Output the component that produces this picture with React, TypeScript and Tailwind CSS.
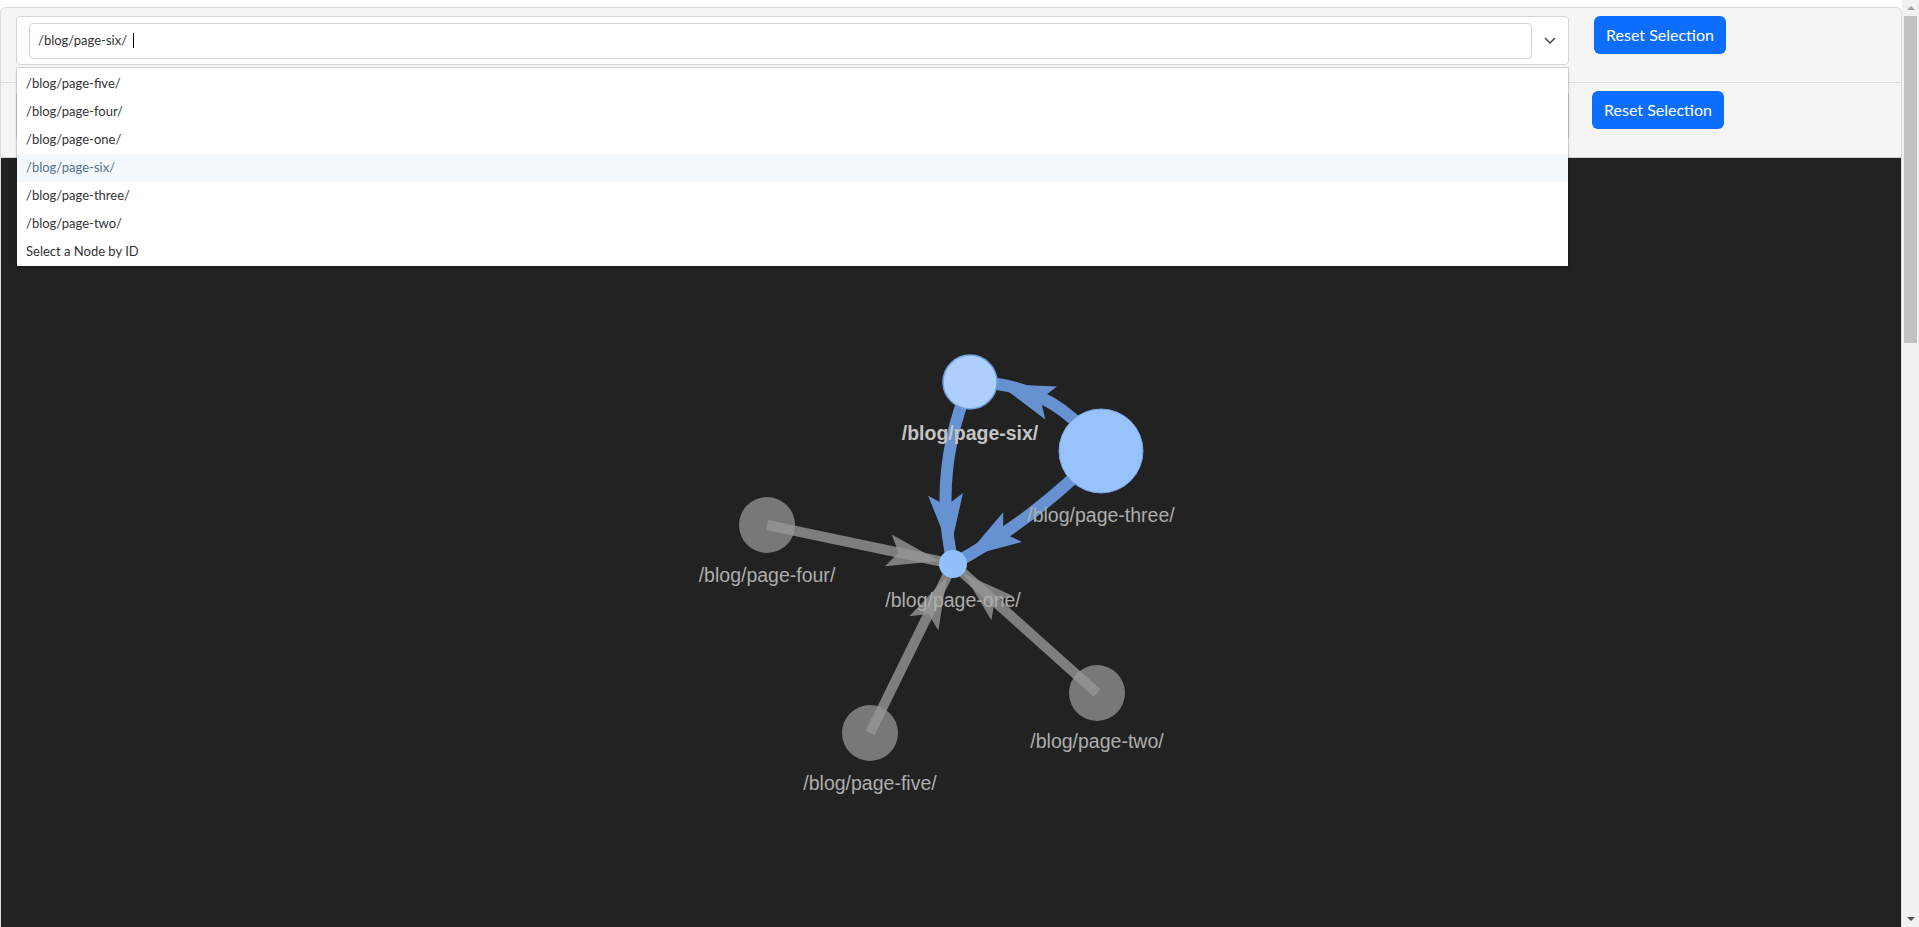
import React from "react";

type P = [number, number];

const OPTIONS = [
  "/blog/page-five/",
  "/blog/page-four/",
  "/blog/page-one/",
  "/blog/page-six/",
  "/blog/page-three/",
  "/blog/page-two/",
  "Select a Node by ID",
];

// node positions are in page coordinates; the svg viewBox is offset to match
const nodes: Record<string, { x: number; y: number; r: number; fill: string; stroke?: string; sw?: number }> = {
  four: { x: 767, y: 525, r: 28, fill: "#787878" },
  five: { x: 870, y: 733, r: 28, fill: "#787878" },
  two: { x: 1097, y: 693, r: 28, fill: "#787878" },
  one: { x: 953, y: 564, r: 14, fill: "#93c0fb" },
  three: { x: 1101, y: 451, r: 42, fill: "#98c2fc", stroke: "#78a6e6", sw: 1 },
  six: { x: 970, y: 382, r: 27, fill: "#aecffd", stroke: "#6f9fe3", sw: 1.5 },
};

const labels = [
  { id: "six", x: 970, y: 440, bold: true },
  { id: "three", x: 1101, y: 522 },
  { id: "one", x: 953, y: 607 },
  { id: "four", x: 767, y: 582 },
  { id: "five", x: 870, y: 790 },
  { id: "two", x: 1097, y: 748 },
];

const qp = (a: P, c: P, b: P, t: number): P => {
  const u = 1 - t;
  return [u * u * a[0] + 2 * u * t * c[0] + t * t * b[0], u * u * a[1] + 2 * u * t * c[1] + t * t * b[1]];
};
const dist = (a: P, b: P) => Math.hypot(a[0] - b[0], a[1] - b[1]);

function arrowHead(a: P, c: P, b: P, r: number, len: number) {
  let t = 1;
  let tip = b;
  while (t > 0 && dist(tip, b) < r) {
    t -= 0.001;
    tip = qp(a, c, b, t);
  }
  let tail = tip;
  while (t > 0 && dist(tail, tip) < len) {
    t -= 0.001;
    tail = qp(a, c, b, t);
  }
  const l = dist(tail, tip);
  const d: P = [(tip[0] - tail[0]) / l, (tip[1] - tail[1]) / l];
  const hw = len / 3.2;
  const base: P = [tip[0] - d[0] * len, tip[1] - d[1] * len];
  const v: P = [base[0] + d[0] * len * 0.2, base[1] + d[1] * len * 0.2];
  const c1: P = [base[0] - d[1] * hw, base[1] + d[0] * hw];
  const c2: P = [base[0] + d[1] * hw, base[1] - d[0] * hw];
  return [tip, c1, v, c2].map((p) => p.map((n) => n.toFixed(1)).join(",")).join(" ");
}

type Link = { s: string; t: string; c?: P; blue?: boolean };

const links: Link[] = [
  { s: "four", t: "one" },
  { s: "five", t: "one" },
  { s: "two", t: "one" },
  { s: "six", t: "one", c: [932, 473], blue: true },
  { s: "three", t: "six", c: [1054, 382], blue: true },
  { s: "three", t: "one", c: [1036, 519], blue: true },
];

function Graph() {
  const grayLinks = links.filter((l) => !l.blue);
  const blueLinks = links.filter((l) => l.blue);

  const geo = (l: Link) => {
    const a: P = [nodes[l.s].x, nodes[l.s].y];
    const b: P = [nodes[l.t].x, nodes[l.t].y];
    const c: P = l.c ?? [(a[0] + b[0]) / 2, (a[1] + b[1]) / 2];
    const tn = nodes[l.t];
    return { a, b, c, r: tn.r + (tn.sw ?? 0) };
  };

  return (
    <svg width="1900" height="769" viewBox="1 158 1900 769" className="block">
      {Object.entries(nodes)
        .filter(([, n]) => n.fill === "#787878")
        .map(([id, n]) => (
          <circle key={id} cx={n.x} cy={n.y} r={n.r} fill={n.fill} />
        ))}

      {grayLinks.map((l, i) => {
        const g = geo(l);
        return (
          <g key={"g" + i} fill="rgba(150,150,150,0.8)">
            <line x1={g.a[0]} y1={g.a[1]} x2={g.b[0]} y2={g.b[1]} stroke="rgba(150,150,150,0.8)" strokeWidth={10} />
            <polygon points={arrowHead(g.a, g.c, g.b, g.r, 52)} />
          </g>
        );
      })}

      {blueLinks.map((l, i) => {
        const g = geo(l);
        return (
          <g key={"b" + i}>
            <path
              d={`M${g.a[0]} ${g.a[1]} Q${g.c[0]} ${g.c[1]} ${g.b[0]} ${g.b[1]}`}
              fill="none"
              stroke="#6692d1"
              strokeWidth={12}
            />
            <polygon points={arrowHead(g.a, g.c, g.b, g.r, 56)} fill="#6692d1" />
          </g>
        );
      })}

      {Object.entries(nodes)
        .filter(([, n]) => n.fill !== "#787878")
        .map(([id, n]) => (
          <circle key={id} cx={n.x} cy={n.y} r={n.r} fill={n.fill} stroke={n.stroke} strokeWidth={n.sw} />
        ))}

      {labels.map((lb) => (
        <text
          key={lb.id}
          x={lb.x}
          y={lb.y}
          textAnchor="middle"
          fontFamily="'Liberation Sans', Arial, sans-serif"
          fontSize={19.5}
          fontWeight={lb.bold ? 700 : 400}
          fill={lb.bold ? "#c4c4c4" : "#adadad"}
        >
          /blog/page-{lb.id}/
        </text>
      ))}
    </svg>
  );
}

function Chevron() {
  return (
    <svg width="12" height="7" viewBox="0 0 12 7">
      <path d="M1 1 L6 6 L11 1" fill="none" stroke="#4a4a4a" strokeWidth="1.5" />
    </svg>
  );
}

function NodeSelect({ value, open }: { value?: string; open?: boolean }) {
  return (
    <div className="relative flex h-[49px] w-[1553px] shrink-0 items-center rounded-[4px] border border-[#d6d6d6] bg-white pl-[12px]">
      <div className="flex h-[36px] flex-1 items-center rounded-[4px] border border-[#ced4da] px-[8px] text-[13px] text-[#333]">
        {value && <span>{value}</span>}
        {open && <span className="ml-[6px] h-[15px] w-px bg-black" />}
      </div>
      <div className="flex w-[36px] justify-center">
        <Chevron />
      </div>
      {open && (
        <div className="absolute left-0 right-0 top-[calc(100%+4px)] bg-white pb-0 pt-[2px] shadow-[0_0_0_1px_rgba(0,0,0,0.12),0_2px_4px_rgba(0,0,0,0.12)]">
          {OPTIONS.map((o) => (
            <div
              key={o}
              className={
                o === value
                  ? "flex h-[28px] items-center bg-[#f3f8fc] pl-[9px] text-[13px] text-[#52708e]"
                  : "flex h-[28px] items-center pl-[9px] text-[13px] text-[#333]"
              }
            >
              {o}
            </div>
          ))}
        </div>
      )}
    </div>
  );
}

function ResetButton({ ml }: { ml: string }) {
  return (
    <button className={`${ml} h-[38px] w-[132px] shrink-0 rounded-[6px] bg-[#0d6efd] text-[16px] text-white`}>
      Reset Selection
    </button>
  );
}

function Scrollbar() {
  return (
    <div className="flex h-full w-[17px] shrink-0 flex-col items-center bg-[#f1f1f1]">
      <div className="flex h-[16px] items-center justify-center">
        <svg width="8" height="4" viewBox="0 0 8 4">
          <polygon points="4,0 8,4 0,4" fill="#a3a3a3" />
        </svg>
      </div>
      <div className="h-[327px] w-[13px] bg-[#c1c1c1]" />
      <div className="flex-1" />
      <div className="flex h-[16px] items-center justify-center">
        <svg width="8" height="4" viewBox="0 0 8 4">
          <polygon points="0,0 8,0 4,4" fill="#505050" />
        </svg>
      </div>
    </div>
  );
}

export default function App() {
  return (
    <div className="flex h-[927px] w-full overflow-hidden bg-white font-['Lato','Segoe_UI',sans-serif]">
      <div className="flex min-w-0 flex-1 flex-col pt-[7px]">
        <div className="flex flex-1 flex-col overflow-hidden rounded-t-[6px] border border-b-0 border-[#dcdcdc] bg-[#f5f5f5]">
          <div className="relative z-10 flex h-[75px] shrink-0 items-start border-b border-[#dcdcdc] px-[15px] pt-[8px]">
            <NodeSelect value="/blog/page-six/" open />
            <ResetButton ml="ml-[25px]" />
          </div>
          <div className="flex h-[75px] shrink-0 items-start border-b border-[#d0d0d0] px-[15px] pt-[8px]">
            <NodeSelect />
            <ResetButton ml="ml-[23px]" />
          </div>
          <div className="flex-1 overflow-hidden bg-[#222222]">
            <Graph />
          </div>
        </div>
      </div>
      <Scrollbar />
    </div>
  );
}
